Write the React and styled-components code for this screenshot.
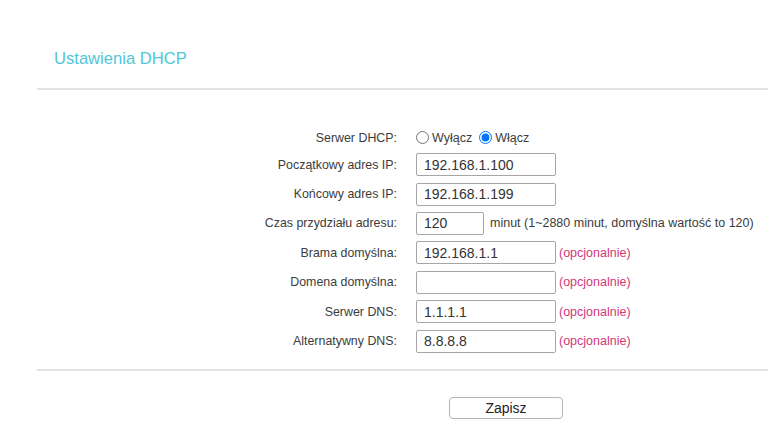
import React from 'react';
import styled, { createGlobalStyle } from 'styled-components';

const GlobalStyle = createGlobalStyle`
  html, body {
    margin: 0;
    padding: 0;
    background: #fff;
    font-family: "Liberation Sans", Arial, sans-serif;
    color: #333;
  }
`;

const Page = styled.div`
  width: 768px;
  height: 424px;
  overflow: hidden;
`;

const Title = styled.h2`
  margin: 0;
  padding: 49px 0 0 54px;
  height: 39px;
  font-size: 16.6px;
  font-weight: normal;
  line-height: 20px;
  color: #4fc6d8;
`;

const Divider = styled.div`
  margin-left: 37px;
  border-top: 2px solid #e2e2e2;
`;

const Form = styled.div`
  display: grid;
  grid-template-columns: 397px 1fr;
  column-gap: 19px;
  padding-top: 35px;
  padding-bottom: 13px;
`;

const Label = styled.div`
  height: ${p => p.$h}px;
  display: flex;
  align-items: center;
  justify-content: flex-end;
  font-size: 12.4px;
  color: #3c3c3c;
`;

const Field = styled.div`
  height: ${p => p.$h}px;
  display: flex;
  align-items: center;
  font-size: 12.5px;
  color: #3c3c3c;
`;

const Input = styled.input`
  box-sizing: border-box;
  width: ${p => p.$w || 140}px;
  height: 23px;
  margin: 0;
  padding: 0 7px;
  border: 1px solid #a6a6a6;
  border-radius: 2px;
  font-family: "Liberation Sans", Arial, sans-serif;
  font-size: 14px;
  color: #333;
  outline: none;
`;

const Hint = styled.span`
  margin-left: ${p => p.$gap}px;
  color: ${p => (p.$pink ? '#d3367a' : '#3c3c3c')};
  white-space: nowrap;
`;

const Radio = styled.label`
  display: flex;
  align-items: center;
  margin-right: 7px;
  input {
    margin: 0 3px 0 0;
    width: 13px;
    height: 13px;
  }
`;

const Footer = styled.div`
  display: flex;
  padding: 26px 0 0 449px;
`;

const Button = styled.button`
  width: 114px;
  height: 22px;
  padding: 0;
  border: 1px solid #b5b5b5;
  border-radius: 4px;
  background: #fff;
  font-family: "Liberation Sans", Arial, sans-serif;
  font-size: 14px;
  color: #222;
`;

const rows = [
  { label: 'Początkowy adres IP:', value: '192.168.1.100' },
  { label: 'Końcowy adres IP:', value: '192.168.1.199' },
  { label: 'Czas przydziału adresu:', value: '120', width: 68, hint: 'minut (1~2880 minut, domyślna wartość to 120)' },
  { label: 'Brama domyślna:', value: '192.168.1.1', optional: true },
  { label: 'Domena domyślna:', value: '', optional: true },
  { label: 'Serwer DNS:', value: '1.1.1.1', optional: true },
  { label: 'Alternatywny DNS:', value: '8.8.8.8', optional: true },
];

export default function App() {
  const h = 29.4;
  return (
    <Page>
      <GlobalStyle />
      <Title>Ustawienia DHCP</Title>
      <Divider />
      <Form>
        <Label $h={25}>Serwer DHCP:</Label>
        <Field $h={25}>
          <Radio><input type="radio" name="dhcp" />Wyłącz</Radio>
          <Radio><input type="radio" name="dhcp" defaultChecked />Włącz</Radio>
        </Field>
        {rows.map(r => (
          <React.Fragment key={r.label}>
            <Label $h={h}>{r.label}</Label>
            <Field $h={h}>
              <Input $w={r.width} defaultValue={r.value} />
              {r.hint && <Hint $gap={6}>{r.hint}</Hint>}
              {r.optional && <Hint $gap={3} $pink>(opcjonalnie)</Hint>}
            </Field>
          </React.Fragment>
        ))}
      </Form>
      <Divider />
      <Footer>
        <Button>Zapisz</Button>
      </Footer>
    </Page>
  );
}
